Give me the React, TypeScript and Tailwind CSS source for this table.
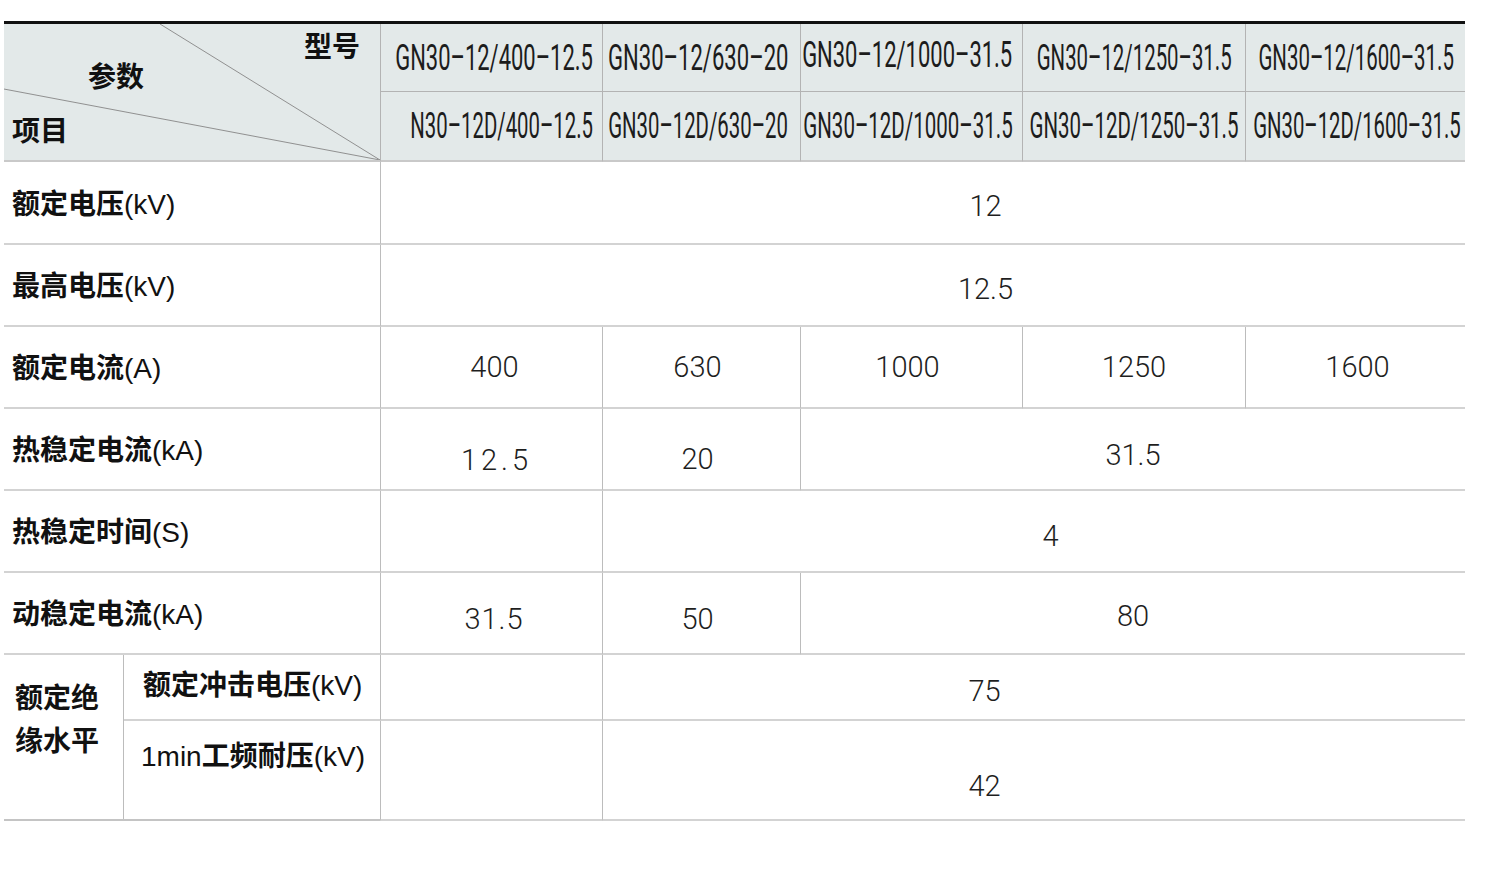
import React from "react";

const font = { fontFamily: '"Liberation Sans", "Noto Sans CJK SC", sans-serif' };
const num = { fontFamily: 'Roboto, "Liberation Sans", sans-serif' };

const headTop = [
  { t: "GN30–12/400–12.5", s: "scale-x-[0.61]", c: "pl-[6px]" },
  { t: "GN30–12/630–20", s: "scale-x-[0.613]", c: "pr-[6px]" },
  { t: "GN30–12/1000–31.5", s: "scale-x-[0.61]", c: "pr-[8px] pb-[6px]" },
  { t: "GN30–12/1250–31.5", s: "scale-x-[0.566]", c: "" },
  { t: "GN30–12/1600–31.5", s: "scale-x-[0.568]", c: "pl-[2px]" },
];

const headBottom = [
  { t: "N30–12D/400–12.5", s: "scale-x-[0.565]", c: "pl-[20px]" },
  { t: "GN30–12D/630–20", s: "scale-x-[0.565]", c: "pr-[6px]" },
  { t: "GN30–12D/1000–31.5", s: "scale-x-[0.569]", c: "pr-[8px]" },
  { t: "GN30–12D/1250–31.5", s: "scale-x-[0.568]", c: "" },
  { t: "GN30–12D/1600–31.5", s: "scale-x-[0.564]", c: "pl-[2px]" },
];

function Model({ t, s, c, last }: { t: string; s: string; c: string; last?: boolean }) {
  return (
    <div
      className={`flex items-center justify-center bg-[#e3e9e9] border-l border-[#b3b3b3] ${
        last ? "border-b-2 border-b-[#c9c9c9]" : "border-b border-b-[#b3b3b3]"
      } ${c}`}
    >
      <span
        className={`inline-block whitespace-nowrap text-[36px] leading-none font-normal text-[#1c1c1c] ${s}`}
        style={num}
      >
        {t}
      </span>
    </div>
  );
}

function Label({ cjk, latin }: { cjk: string; latin: string }) {
  return (
    <div className="flex items-center pl-[8px] pt-[4px] border-b-2 border-[#d3d3d3] text-[28px] leading-none text-[#111]">
      <span className="font-bold">{cjk}</span>
      <span>{latin}</span>
    </div>
  );
}

function Val({ v, c = "" }: { v?: string; c?: string }) {
  return (
    <div
      className={`flex items-center justify-center border-l border-l-[#bcbcbc] border-b-2 border-b-[#d3d3d3] text-[29px] leading-none font-light text-[#1e1e1e] ${c}`}
      style={num}
    >
      {v}
    </div>
  );
}

export default function App() {
  return (
    <div className="w-[1502px] h-[880px] bg-white" style={font}>
      <div className="ml-[4px] mt-[21px] w-[1461px] border-t-[3px] border-[#111]">
        <div className="grid grid-cols-[376px_222px_198px_222px_223px_220px] grid-rows-[68px_70px_83px_82px_82px_82px_82px_82px_66px_100px]">
          {/* header */}
          <div className="relative row-span-2 flex flex-col bg-[#e3e9e9] border-b-2 border-[#c9c9c9] pt-[10px] text-[28px] leading-none font-bold text-[#111]">
            <svg
              className="absolute inset-0 w-full h-full"
              viewBox="0 0 376 138"
              preserveAspectRatio="none"
            >
              <line x1="156" y1="0" x2="376" y2="138" stroke="#8f8f8f" strokeWidth="1" />
              <line x1="0" y1="66" x2="376" y2="138" stroke="#8f8f8f" strokeWidth="1" />
            </svg>
            <span className="self-end pr-[20px]">型号</span>
            <span className="ml-[84px] mt-[2px]">参数</span>
            <span className="ml-[8px] mt-[26px]">项目</span>
          </div>
          {headTop.map((m) => (
            <Model key={m.t} {...m} />
          ))}
          {headBottom.map((m) => (
            <Model key={m.t} {...m} last />
          ))}

          {/* 额定电压 */}
          <Label cjk="额定电压" latin="(kV)" />
          <Val v="12" c="col-span-5 pl-[125px] pt-[8px]" />

          {/* 最高电压 */}
          <Label cjk="最高电压" latin="(kV)" />
          <Val v="12.5" c="col-span-5 pl-[125px] pt-[8px]" />

          {/* 额定电流 */}
          <Label cjk="额定电流" latin="(A)" />
          <Val v="400" c="pl-[6px]" />
          <Val v="630" c="pr-[8px]" />
          <Val v="1000" c="pr-[8px]" />
          <Val v="1250" />
          <Val v="1600" c="pl-[4px]" />

          {/* 热稳定电流 */}
          <Label cjk="热稳定电流" latin="(kA)" />
          <Val v="12.5" c="pl-[10px] pt-[23px] tracking-[4px]" />
          <Val v="20" c="pr-[8px] pt-[21px]" />
          <Val v="31.5" c="col-span-3 pt-[13px]" />

          {/* 热稳定时间 */}
          <Label cjk="热稳定时间" latin="(S)" />
          <Val />
          <Val v="4" c="col-span-4 pl-[33px] pt-[11px]" />

          {/* 动稳定电流 */}
          <Label cjk="动稳定电流" latin="(kA)" />
          <Val v="31.5" c="pl-[5px] pt-[13px] tracking-[1px]" />
          <Val v="50" c="pr-[8px] pt-[13px]" />
          <Val v="80" c="col-span-3 pt-[7px]" />

          {/* 额定绝缘水平 */}
          <div className="row-span-2 flex border-b-2 border-[#c4c4c4] text-[28px] text-[#111]">
            <div className="w-[120px] flex flex-col justify-center pl-[11px] pb-[34px] border-r border-[#bcbcbc] font-bold leading-[43px]">
              <span>额定绝</span>
              <span>缘水平</span>
            </div>
            <div className="flex-1 flex flex-col leading-none">
              <div className="h-[66px] flex items-center pl-[19px] pb-[2px] border-b-2 border-[#d3d3d3]">
                <span className="font-bold">额定冲击电压</span>
                <span>(kV)</span>
              </div>
              <div className="flex-1 flex items-start pl-[17px] pt-[22px]">
                <span>1min</span>
                <span className="font-bold">工频耐压</span>
                <span>(kV)</span>
              </div>
            </div>
          </div>
          <Val />
          <Val v="75" c="col-span-4 pr-[99px] pt-[9px]" />
          <Val c="border-b-[#c4c4c4]" />
          <Val v="42" c="col-span-4 pr-[99px] pt-[32px] border-b-[#c4c4c4]" />
        </div>
      </div>
    </div>
  );
}
